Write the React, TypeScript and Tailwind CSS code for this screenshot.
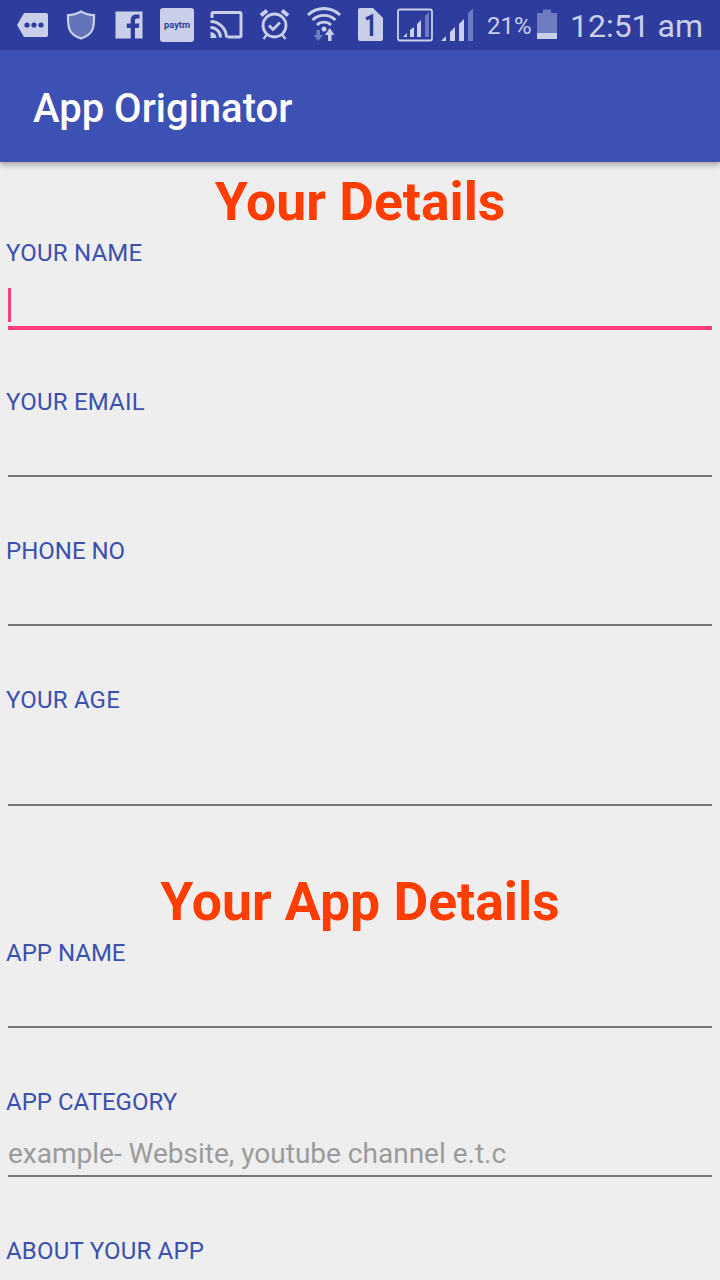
const P = "#c9cfe8";
const D = "#6f7cc2";
const B = "#2e3c9e";

function StatusIcons() {
  return (
    <svg width="720" height="50" viewBox="0 0 720 50" className="block">
      {/* message bubble */}
      <path d="M24 13h22a2 2 0 0 1 2 2v20a2 2 0 0 1-2 2H24l-7-12z" fill={P} />
      <circle cx="27" cy="25" r="2.6" fill={B} /><circle cx="34" cy="25" r="2.6" fill={B} /><circle cx="41" cy="25" r="2.6" fill={B} />
      {/* shield */}
      <path d="M81 11.500c5 3 9 3.500 13 3.500 0 11 .5 19-13 23.500C67.500 34 68 26 68 15c4 0 8-.5 13-3.500z" fill="#6573bd" stroke={P} strokeWidth="2.200" />
      {/* facebook */}
      <path d="M115.500 11.500h27v27h-7.500v-10.500h3.800l.6-4.500h-4.400v-2.700c0-1.300.4-2.200 2.200-2.200h2.300v-4a30 30 0 0 0-3.300-.2c-3.300 0-5.500 2-5.500 5.700v3.400h-3.900v4.500h3.900v10.500h-15.200z" fill={P} />
      {/* paytm */}
      <rect x="160" y="8" width="34" height="34" rx="3" fill={P} />
      <text x="164" y="28" textLength="26" lengthAdjust="spacingAndGlyphs" fontSize="9.500" fontWeight="700" fontFamily="Roboto, sans-serif" fill={B}>paytm</text>
      {/* cast */}
      <path d="M212 18v-4a1.500 1.500 0 0 1 1.500-1.500h26a1.500 1.500 0 0 1 1.500 1.500v21.500a1.500 1.500 0 0 1-1.500 1.500h-12" fill="none" stroke={P} strokeWidth="3" />
      <path d="M210.500 21.500a16 16 0 0 1 16 16M210.500 27.500a10 10 0 0 1 10 10" fill="none" stroke={P} strokeWidth="3" />
      <path d="M210.500 32a6 6 0 0 1 6 6h-6z" fill={P} />
      {/* alarm */}
      <circle cx="274.500" cy="25.500" r="11.500" fill="none" stroke={P} strokeWidth="2.800" />
      <path d="M269 25.500l4 4 7-7" fill="none" stroke={P} strokeWidth="2.800" />
      <path d="M261 15.500l6-5M288 15.500l-6-5" stroke={P} strokeWidth="4" />
      <path d="M266.500 35l-3 4M282.500 35l3 4" stroke={P} strokeWidth="2.200" />
      {/* wifi */}
      <path d="M308 15a23 23 0 0 1 32 0M312.500 20a16.500 16.500 0 0 1 23 0M317 25a10 10 0 0 1 14 0" fill="none" stroke={P} strokeWidth="2.800" />
      <circle cx="324" cy="29" r="2.500" fill={P} />
      <path d="M316.500 30h3.500v5h3l-4.700 6-4.800-6h3z" fill={D} />
      <path d="M328 41v-6h-3l4.700-7 4.800 7h-3v6z" fill={P} />
      {/* sim */}
      <path d="M360 8h13l10 10v21a2 2 0 0 1-2 2h-21a2 2 0 0 1-2-2V10a2 2 0 0 1 2-2z" fill={P} />
      <path d="M366 19l5.500-2.500V36" fill="none" stroke={B} strokeWidth="3.500" />
      {/* boxed signal */}
      <rect x="398" y="9.500" width="34" height="31" rx="2" fill="none" stroke={P} strokeWidth="1.800" />
      <path d="M403 37l4-4v4zM410 37v-7l4-3v10zM417 37V24l4-4v17z" fill={P} />
      <path d="M425 37V16l4-4v25z" fill={D} />
      {/* signal */}
      <path d="M441 41l5-5v5zM450 41V32l5-5v14zM459 41V24l5-5v22z" fill={P} />
      <path d="M468 41V13l5-4.500V41z" fill={D} />
      {/* battery */}
      <path d="M537 13h6v-3.500h8V13h6v20h-20z" fill={D} />
      <rect x="537" y="33" width="20" height="6" fill={P} />
    </svg>
  );
}

function Field({ label, h, hint, focused, wide }: { label: string; h: string; hint?: string; focused?: boolean; wide?: boolean }) {
  return (
    <div className={`flex flex-col ${h}`}>
      <div className={`pl-[6px] text-[24px] leading-[32px] text-[#3c50ae] ${wide ? "tracking-[0.2px]" : ""}`}>{label}</div>
      <div className={`mt-auto ml-2 mr-2 relative ${focused ? "border-b-4 border-[#ff3d7f]" : "border-b-2 border-[#757575]"}`}>
        {focused && <div className="absolute left-0 bottom-[4px] w-[3px] h-[34px] bg-[#ff3d7f]" />}
        {hint && <div className="pb-[1px] text-[28px] leading-[40px] text-[#9b9b9b]">{hint}</div>}
      </div>
    </div>
  );
}

function Heading({ children }: { children: string }) {
  return <div className="text-center text-[53.5px] leading-[66px] pb-[2px] font-bold text-[#ff3d00]">{children}</div>;
}

export default function App() {
  return (
    <div className="w-[720px] h-[1280px] overflow-hidden bg-[#eeeeee] font-['Roboto',sans-serif]">
      <div className="relative z-10 shadow-[0_3px_6px_rgba(0,0,0,0.3)]">
        <div className="relative h-[50px] bg-[#2e3c9e]">
          <StatusIcons />
          <div className="absolute left-[487px] top-[9px] text-[24px] leading-[34px] text-[#c9cfe8]">21%</div>
          <div className="absolute right-[17px] top-[6px] text-[32px] leading-[40px] text-[#c9cfe8]">12:51 am</div>
        </div>
        <div className="h-[112px] bg-[#3d50b3] flex items-center pl-[33px] pt-[5px] text-[40px] font-medium text-white">App Originator</div>
      </div>
      <div className="pt-[7px]">
        <Heading>Your Details</Heading>
        <Field label="YOUR NAME" h="h-[93px]" focused wide />
        <div className="mt-[56px]"><Field label="YOUR EMAIL" h="h-[91px]" wide /></div>
        <div className="mt-[58px]"><Field label="PHONE NO" h="h-[91px]" /></div>
        <div className="mt-[58px]"><Field label="YOUR AGE" h="h-[122px]" wide /></div>
        <div className="mt-[63px]"><Heading>Your App Details</Heading></div>
        <Field label="APP NAME" h="h-[91px]" />
        <div className="mt-[58px]"><Field label="APP CATEGORY" h="h-[91px]" hint="example- Website, youtube channel e.t.c" /></div>
        <div className="mt-[58px]"><Field label="ABOUT YOUR APP" h="h-[91px]" wide /></div>
      </div>
    </div>
  );
}
